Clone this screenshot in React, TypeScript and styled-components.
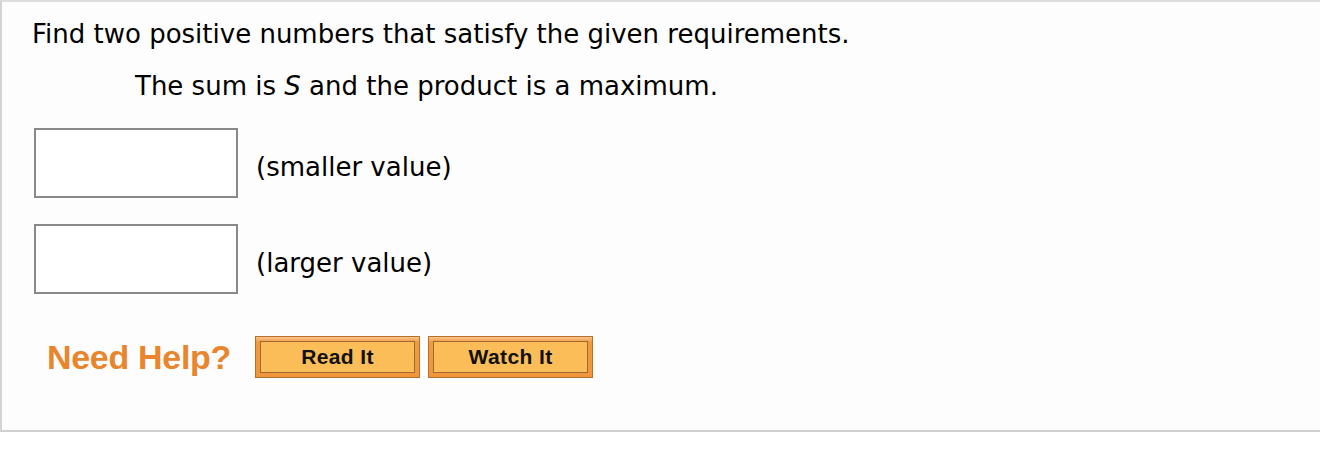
import React from "react";
import styled, { createGlobalStyle } from "styled-components";

const GlobalStyle = createGlobalStyle`
  body {
    margin: 0;
    background: #fff;
    font-family: "DejaVu Sans", Verdana, sans-serif;
    color: #000;
  }
`;

const Panel = styled.section`
  box-sizing: border-box;
  height: 432px;
  border-top: 2px solid #dcdcdc;
  border-left: 2px solid #d4d4d4;
  border-bottom: 2px solid #cfcfcf;
  background: #fdfdfd;
  padding: 16px 0 0 30px;
`;

const Prompt = styled.p`
  margin: 0;
  font-size: 26px;
  line-height: 32px;
`;

const Requirement = styled(Prompt)`
  margin: 20px 0 0 103px;
`;

const AnswerList = styled.div`
  display: flex;
  flex-direction: column;
  gap: 26px;
  margin-top: 26px;
`;

const AnswerRow = styled.div`
  display: flex;
  align-items: center;
  gap: 18px;
`;

const AnswerBox = styled.input`
  box-sizing: border-box;
  width: 204px;
  height: 70px;
  margin: 0 0 0 2px;
  border: 2px solid #898989;
  background: #fff;
  font-size: 20px;
  padding: 0 8px;
  outline: none;
`;

const AnswerLabel = styled.span`
  font-size: 26px;
  line-height: 32px;
  padding-top: 8px;
`;

const HelpRow = styled.div`
  display: flex;
  align-items: center;
  margin-top: 42px;
  padding-left: 15px;
`;

const HelpTitle = styled.span`
  font-family: "Liberation Sans", Arial, sans-serif;
  font-weight: 700;
  font-size: 34px;
  line-height: 40px;
  color: #e9852d;
  margin-right: 24px;
  letter-spacing: -0.3px;
`;

const HelpButton = styled.button`
  box-sizing: border-box;
  width: 165px;
  height: 42px;
  margin-right: 8px;
  padding: 4px;
  border: 1px solid #b5702c;
  background: linear-gradient(#f8c58e 0px, #f19a3e 5px, #f0953a 100%);
  cursor: pointer;
  display: flex;
`;

const ButtonFace = styled.span`
  flex: 1;
  display: flex;
  align-items: center;
  justify-content: center;
  border: 1px solid #9d6a33;
  background: #fbbd58;
  font-family: "Liberation Sans", Arial, sans-serif;
  font-weight: 700;
  font-size: 21px;
  color: #111;
  letter-spacing: 0.4px;
`;

const answers = ["smaller value", "larger value"];
const helpLinks = ["Read It", "Watch It"];

export default function App() {
  return (
    <>
      <GlobalStyle />
      <Panel>
        <Prompt>Find two positive numbers that satisfy the given requirements.</Prompt>
        <Requirement>
          The sum is <i>S</i> and the product is a maximum.
        </Requirement>
        <AnswerList>
          {answers.map((label) => (
            <AnswerRow key={label}>
              <AnswerBox type="text" aria-label={label} />
              <AnswerLabel>({label})</AnswerLabel>
            </AnswerRow>
          ))}
        </AnswerList>
        <HelpRow>
          <HelpTitle>Need Help?</HelpTitle>
          {helpLinks.map((link) => (
            <HelpButton key={link} type="button">
              <ButtonFace>{link}</ButtonFace>
            </HelpButton>
          ))}
        </HelpRow>
      </Panel>
    </>
  );
}
